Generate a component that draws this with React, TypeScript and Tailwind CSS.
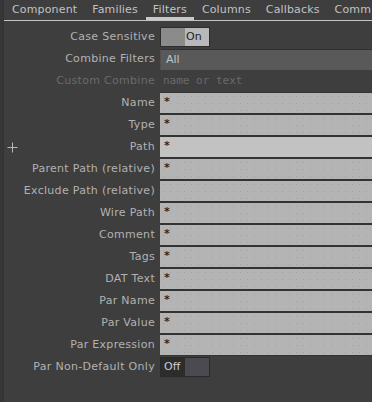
import React from "react";

const tabs = ["Component", "Families", "Filters", "Columns", "Callbacks", "Comm"];

const textRows: { label: string; value: string; light?: boolean; plus?: boolean }[] = [
  { label: "Name", value: "*" },
  { label: "Type", value: "*" },
  { label: "Path", value: "*", light: true, plus: true },
  { label: "Parent Path (relative)", value: "*" },
  { label: "Exclude Path (relative)", value: "" },
  { label: "Wire Path", value: "*" },
  { label: "Comment", value: "*" },
  { label: "Tags", value: "*" },
  { label: "DAT Text", value: "*" },
  { label: "Par Name", value: "*" },
  { label: "Par Value", value: "*" },
  { label: "Par Expression", value: "*" },
];

function Label({ children, dim }: { children: React.ReactNode; dim?: boolean }) {
  return (
    <div
      className={
        "w-[156px] shrink-0 pr-[5px] text-right text-[11px] tracking-[0.3px] leading-[22px] whitespace-nowrap " +
        (dim ? "text-[#6a6a6a]" : "text-[#b2b2b2]")
      }
    >
      {children}
    </div>
  );
}

export default function App() {
  return (
    <div
      className="w-[372px] h-[402px] bg-[#3e3e3e] overflow-hidden flex"
      style={{ fontFamily: '"DejaVu Sans", Verdana, sans-serif' }}
    >
      <div className="w-[4px] shrink-0 bg-[#363636] border-r border-[#333333]" />
      <div className="flex-1 flex flex-col min-w-0">
        {/* Tabs */}
        <div className="h-[21px] flex items-start border-b border-[#c4c4c4] pl-[8px] gap-[15px] whitespace-nowrap">
          {tabs.map((t) => (
            <div
              key={t}
              className={
                "relative h-[20px] text-[11px] tracking-[0.15px] leading-[19px] text-[#c2c2c2] " +
                (t === "Filters" ? "px-[7px] -mx-[7px] border-b-[3px] border-[#c8c8c8]" : "")
              }
            >
              {t}
            </div>
          ))}
        </div>

        <div className="pt-[5px] flex flex-col relative">
          {/* Case Sensitive */}
          <div className="h-[22px] flex items-center">
            <Label>Case Sensitive</Label>
            <div className="h-[20px] w-[50px] flex border border-[#2c2c2c]">
              <div className="w-[24px] bg-[#8b8b8b]" />
              <div className="flex-1 bg-[#b9b9b9] text-[11px] leading-[18px] text-[#1e1e1e] pl-[1px]">On</div>
            </div>
          </div>

          {/* Combine Filters */}
          <div className="h-[22px] flex items-center">
            <Label>Combine Filters</Label>
            <div className="h-[21px] flex-1 bg-[#595959] border-t border-[#303030] border-l border-l-[#505050] text-[11px] leading-[19px] text-[#c4c4c4] pl-[5px]">
              All
            </div>
          </div>

          {/* Custom Combine */}
          <div className="h-[22px] flex items-center">
            <Label dim>Custom Combine</Label>
            <div
              className="pl-[3px] text-[11px] text-[#6a6a6a] leading-[22px]"
              style={{ fontFamily: '"DejaVu Sans Mono", "Liberation Mono", monospace' }}
            >
              name or text
            </div>
          </div>

          {textRows.map((r) => (
            <div key={r.label} className="h-[22px] flex items-center relative">
              {r.plus && (
                <svg className="absolute left-[3px] top-[6px]" width="11" height="11" viewBox="0 0 11 11">
                  <path d="M5.5 0.5V10.5M0.5 5.5H10.5" stroke="#b8b8b8" strokeWidth="1" />
                </svg>
              )}
              <Label>{r.label}</Label>
              <div
                className={
                  "h-[22px] flex-1 border-y border-[#333333] text-[11px] leading-[18px] font-bold text-[#2a2a2a] pl-[4px] " +
                  (r.light
                    ? "bg-[#c2c2c2]"
                    : "bg-[#b4b4b4] bg-[radial-gradient(circle,#a2a2a2_0.6px,transparent_0.8px)] bg-[length:7px_7px]")
                }
              >
                {r.value}
              </div>
            </div>
          ))}

          {/* Par Non-Default Only */}
          <div className="h-[22px] flex items-center">
            <Label>Par Non-Default Only</Label>
            <div className="h-[20px] w-[50px] flex border border-[#2a2a2a]">
              <div className="w-[24px] bg-[#2c2c2c] text-[11px] leading-[18px] text-[#cccccc] pl-[3px]">Off</div>
              <div className="flex-1 bg-[#4b4a51]" />
            </div>
          </div>
        </div>
      </div>
    </div>
  );
}
